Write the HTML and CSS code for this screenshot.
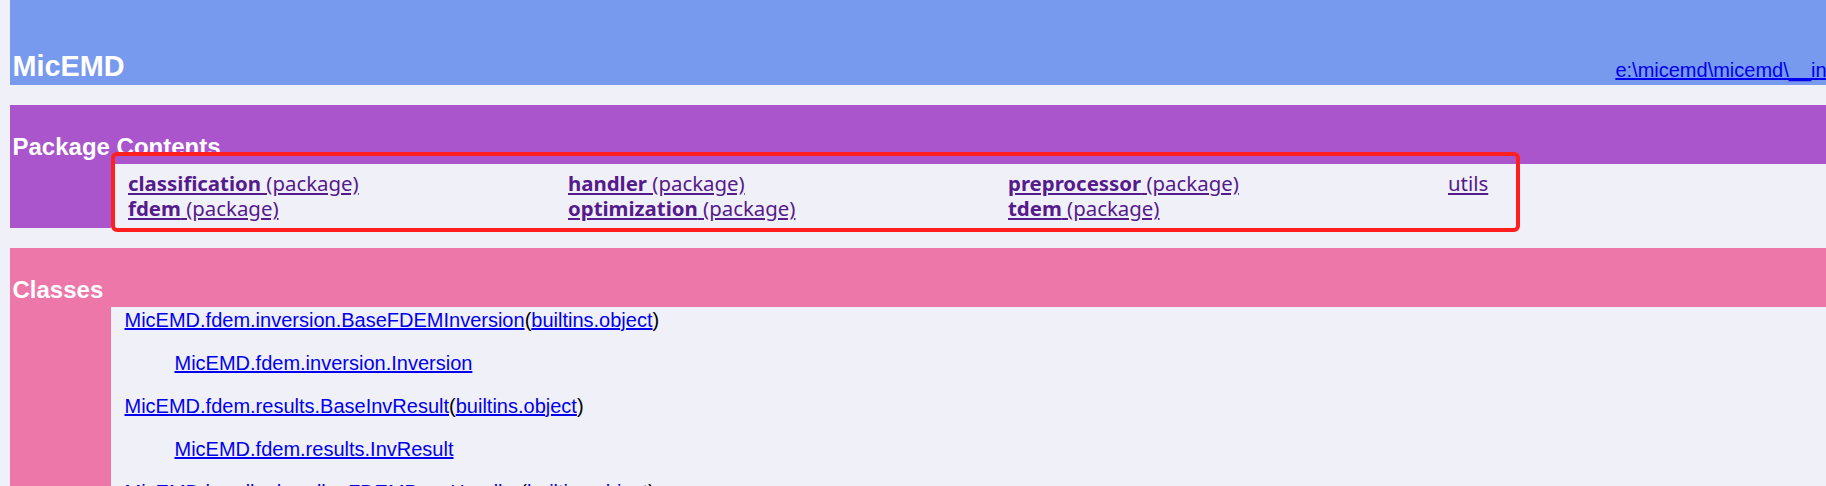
FILE: index.html
```html
<!DOCTYPE html>
<html>
<head>
<meta charset="utf-8">
<title>Python: package MicEMD</title>
<link rel="stylesheet" href="styles.css">
</head>
<body>
<div class="page">
  <div class="heading">
    <div class="title">MicEMD</div>
    <div class="fileinfo"><a href="#" class="link">index</a><br><a href="#" class="link">e:\micemd\micemd\__init__.py</a></div>
  </div>

  <section class="section pkg">
    <div class="sec-title">Package Contents</div>
    <div class="sec-body">
      <div class="gutter"></div>
      <div class="sec-content">
        <div class="pkg-grid">
          <div class="pkg-col">
            <a href="#" class="visited"><strong>classification</strong>&nbsp;(package)</a><br>
            <a href="#" class="visited"><strong>fdem</strong>&nbsp;(package)</a>
          </div>
          <div class="pkg-col">
            <a href="#" class="visited"><strong>handler</strong>&nbsp;(package)</a><br>
            <a href="#" class="visited"><strong>optimization</strong>&nbsp;(package)</a>
          </div>
          <div class="pkg-col">
            <a href="#" class="visited"><strong>preprocessor</strong>&nbsp;(package)</a><br>
            <a href="#" class="visited"><strong>tdem</strong>&nbsp;(package)</a>
          </div>
          <div class="pkg-col">
            <a href="#" class="visited">utils</a>
          </div>
        </div>
      </div>
    </div>
  </section>

  <section class="section classes">
    <div class="sec-title">Classes</div>
    <div class="sec-body">
      <div class="gutter"></div>
      <div class="sec-content">
        <dl class="tree">
          <dt><a href="#" class="link">MicEMD.fdem.inversion.BaseFDEMInversion</a>(<a href="#" class="link">builtins.object</a>)</dt>
          <dd><dl><dt><a href="#" class="link">MicEMD.fdem.inversion.Inversion</a></dt></dl></dd>
          <dt><a href="#" class="link">MicEMD.fdem.results.BaseInvResult</a>(<a href="#" class="link">builtins.object</a>)</dt>
          <dd><dl><dt><a href="#" class="link">MicEMD.fdem.results.InvResult</a></dt></dl></dd>
          <dt><a href="#" class="link">MicEMD.handler.handler.FDEMBaseHandler</a>(<a href="#" class="link">builtins.object</a>)</dt>
          <dd><dl><dt><a href="#" class="link">MicEMD.handler.handler.FDEMHandler</a></dt></dl></dd>
        </dl>
      </div>
    </div>
  </section>
</div>
<div class="annotation"></div>
</body>
</html>
```
FILE: styles.css
```css
html {
  overflow: hidden;
  background: #f0f0f8;
}

body {
  margin: 0;
  background: #f0f0f8;
  font-family: "Noto Sans", sans-serif;
  font-size: 20px;
  color: #000;
}

.page {
  width: 1878px;
  margin-left: 10px;
}

.link {
  color: #0000ee;
  text-decoration: underline;
}

.visited {
  color: #551a8b;
  text-decoration: underline;
}

/* heading bar */
.heading {
  height: 85px;
  box-sizing: border-box;
  display: flex;
  justify-content: space-between;
  align-items: flex-end;
  padding: 0 2.5px 2.5px 2.5px;
  background: #7799ee;
  font-family: "Liberation Sans", Arial, sans-serif;
  color: #fff;
}

.title {
  font-size: 28.8px;
  font-weight: bold;
  line-height: 33px;
}

.fileinfo {
  text-align: right;
  font-size: 20px;
  line-height: 23px;
  padding-bottom: 1px;
}

/* sections */
.section {
  margin-top: 20px;
}

.pkg {
  background: #aa55cc;
}

.classes {
  background: #ee77aa;
}

.sec-title {
  height: 59px;
  box-sizing: border-box;
  display: flex;
  align-items: flex-end;
  padding: 0 0 3.3px 2.5px;
  font-family: "Liberation Sans", Arial, sans-serif;
  font-size: 24px;
  font-weight: bold;
  line-height: 28px;
  color: #fff;
}

.sec-body {
  display: flex;
}

.gutter {
  width: 101px;
  flex: none;
}

.sec-content {
  flex: 1;
  background: #f0f0f8;
}

/* package contents */
.pkg .sec-content {
  padding: 6.5px 0 6.5px 17px;
}

.pkg-grid {
  display: grid;
  grid-template-columns: repeat(4, 1fr);
  font-size: 20.4px;
  line-height: 25.5px;
}

.pkg-col strong {
  font-weight: bold;
}

/* classes */
.classes .sec-content {
  padding: 2px 0 40px 13.5px;
  font-family: "Liberation Sans", Arial, sans-serif;
  font-size: 20px;
  line-height: 23px;
}

.tree {
  margin: 0;
}

.tree dd {
  margin: 0 0 0 50px;
}

.tree dd dl {
  margin: 20px 0;
}

/* red annotation frame drawn over the screenshot */
.annotation {
  position: absolute;
  left: 111px;
  top: 152px;
  width: 1409px;
  height: 80px;
  box-sizing: border-box;
  border: 4px solid #ff1f1f;
  border-radius: 6px;
  pointer-events: none;
}
```
